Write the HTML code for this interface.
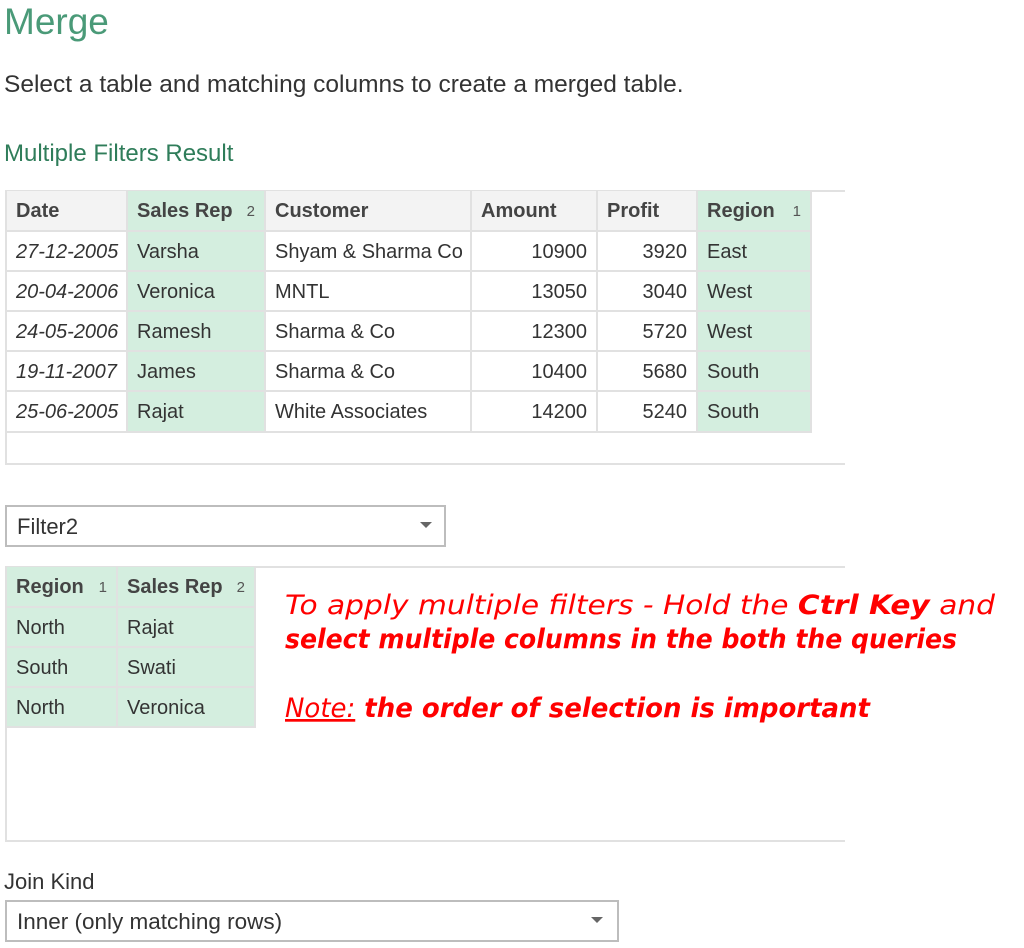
<!DOCTYPE html>
<html><head><meta charset="utf-8"><style>
body{margin:0;width:1024px;height:948px;background:#fff;position:relative;overflow:hidden;font-family:"Liberation Sans",sans-serif;color:#333}
.a{position:absolute;white-space:nowrap}
.c{position:absolute;box-sizing:border-box;height:40px;line-height:40px;font-size:20px;padding:2px 9px 0;border-right:2px solid #e1e1e1;border-bottom:2px solid #e1e1e1;white-space:nowrap;color:#333}
.h{background:#f3f3f3;font-weight:bold;color:#444}
.g{background:#d4eedf}
.i{font-style:italic}
.r{text-align:right}
.n{position:absolute;right:9px;font-size:15px;font-weight:normal;color:#555}
</style></head><body>
<div class="a" style="left:4px;top:0;font-size:37px;color:#4a9a78;line-height:44px">Merge</div>
<div class="a" style="left:4px;top:71px;font-size:24.5px;color:#333;line-height:28px">Select a table and matching columns to create a merged table.</div>
<div class="a" style="left:4px;top:140px;font-size:24px;color:#2f7d5a;line-height:28px">Multiple Filters Result</div>

<div class="a" style="left:5px;top:190px;width:840px;height:275px;border:2px solid #e1e1e1;border-right:none;box-sizing:border-box"></div>
<div id="t1"></div>

<div class="a" style="left:5px;top:505px;width:441px;height:42px;border:2px solid #bdbdbd;box-sizing:border-box;font-size:22px;line-height:40px;padding-left:10px;color:#333">Filter2</div>
<div class="a" style="left:420px;top:522px;width:0;height:0;border-left:6px solid transparent;border-right:6px solid transparent;border-top:6px solid #666"></div>

<div class="a" style="left:5px;top:566px;width:840px;height:276px;border:2px solid #e1e1e1;border-right:none;box-sizing:border-box"></div>
<div id="t2"></div>

<svg class="a" style="left:0;top:0" width="1024" height="948">
<g fill="#ff0000" font-family="'DejaVu Sans',sans-serif" font-style="italic" font-size="27">
<text x="285" y="614" textLength="710" lengthAdjust="spacingAndGlyphs">To apply multiple filters - Hold the <tspan font-weight="bold">Ctrl Key</tspan> and</text>
<text x="285" y="648" textLength="672" lengthAdjust="spacingAndGlyphs" font-weight="bold">select multiple columns in the both the queries</text>
<text x="285" y="717" textLength="585" lengthAdjust="spacingAndGlyphs"><tspan text-decoration="underline">Note:</tspan><tspan font-weight="bold"> the order of selection is important</tspan></text>
</g>
</svg>

<div class="a" style="left:4px;top:868px;font-size:22px;color:#333;line-height:28px">Join Kind</div>
<div class="a" style="left:5px;top:900px;width:614px;height:42px;border:2px solid #bdbdbd;box-sizing:border-box;font-size:22.5px;line-height:40px;padding-left:10px;color:#333">Inner (only matching rows)</div>
<div class="a" style="left:591px;top:917px;width:0;height:0;border-left:6px solid transparent;border-right:6px solid transparent;border-top:6px solid #666"></div>

<script>
function tbl(id,x0,y0,cols,rows,hs){var h='';var ys=hs;
for(var r=0;r<rows.length;r++){var x=x0;for(var c=0;c<cols.length;c++){var w=cols[c][0],cls='c '+(r==0?'h ':'')+(cols[c][1]&&r>0?cols[c][1]:'')+(cols[c][2]?' g':'');if(r==0&&cols[c][2])cls='c h g';
var txt=rows[r][c];var extra='';if(r==0&&cols[c][3])extra='<span class="n">'+cols[c][3]+'</span>';
h+='<div class="'+cls+'" style="left:'+x+'px;top:'+ys[r]+'px;width:'+w+'px;height:'+(ys[r+1]-ys[r])+'px;line-height:'+(ys[r+1]-ys[r]-4)+'px">'+txt+extra+'</div>';x+=w;}}
document.getElementById(id).innerHTML=h;}
tbl('t1',7,191,[[121,'i'],[138,'',1,'2'],[206,''],[126,'r'],[100,'r'],[114,'',1,'1']],
[['Date','Sales Rep','Customer','Amount','Profit','Region'],
['27-12-2005','Varsha','Shyam &amp; Sharma Co','10900','3920','East'],
['20-04-2006','Veronica','MNTL','13050','3040','West'],
['24-05-2006','Ramesh','Sharma &amp; Co','12300','5720','West'],
['19-11-2007','James','Sharma &amp; Co','10400','5680','South'],
['25-06-2005','Rajat','White Associates','14200','5240','South']],[191,232,272,312,352,392,433]);
tbl('t2',7,566,[[111,'',1,'1'],[138,'',1,'2']],
[['Region','Sales Rep'],['North','Rajat'],['South','Swati'],['North','Veronica']],[567,608,648,688,728]);
</script>
</body></html>
